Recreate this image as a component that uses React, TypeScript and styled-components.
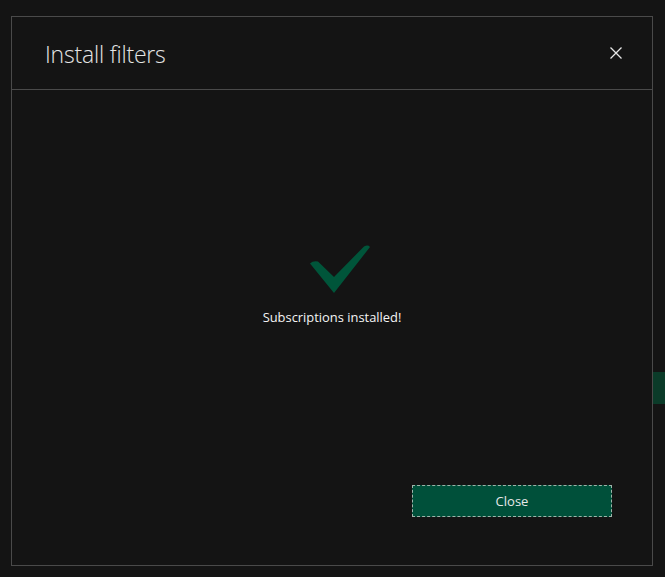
import React from "react"
import styled, { createGlobalStyle } from "styled-components"

const GlobalStyle = createGlobalStyle`
  html, body {
    margin: 0;
    padding: 0;
    background: #141414;
  }
  body {
    font-family: "Open Sans", "Liberation Sans", sans-serif;
    color: #f0f0f0;
  }
`

const Page = styled.div`
  position: relative;
  width: 665px;
  height: 577px;
  padding: 16px 0 0 11px;
  box-sizing: border-box;
  overflow: hidden;
`

const BehindTab = styled.div`
  position: absolute;
  left: 653px;
  top: 372px;
  width: 20px;
  height: 32px;
  background: #0b3b29;
`

const Dialog = styled.div`
  position: relative;
  z-index: 1;
  width: 642px;
  height: 550px;
  box-sizing: border-box;
  border: 1px solid #4a4a4a;
  background: #141414;
  display: flex;
  flex-direction: column;
`

const Header = styled.div`
  height: 72px;
  flex: none;
  display: flex;
  align-items: center;
  justify-content: space-between;
  padding: 0 26px 0 33px;
  border-bottom: 1px solid #4a4a4a;
`

const Title = styled.h1`
  margin: 0;
  padding-top: 2px;
  font-family: "Open Sans", "Liberation Sans", sans-serif;
  font-weight: 300;
  font-size: 23px;
  letter-spacing: -0.2px;
  color: #e4e4e4;
`

const CloseIcon = styled.button`
  width: 20px;
  height: 20px;
  padding: 0;
  border: none;
  background: transparent;
  display: flex;
  align-items: center;
  justify-content: center;
  cursor: pointer;
`

const Body = styled.div`
  flex: 1;
  display: flex;
  flex-direction: column;
  padding: 0 40px 48px;
`

const Status = styled.div`
  margin-top: 154px;
  display: flex;
  flex-direction: column;
  align-items: center;
  gap: 14px;
`

const Message = styled.p`
  margin: 0;
  font-size: 12.9px;
  color: #f4f4f4;
`

const Footer = styled.div`
  margin-top: auto;
  display: flex;
  justify-content: flex-end;
`

const Button = styled.button`
  width: 200px;
  height: 32px;
  box-sizing: border-box;
  background: #00503a;
  border: 1px dashed #9fb4ab;
  color: #e8e8e8;
  font-family: "Open Sans", "Liberation Sans", sans-serif;
  font-size: 13px;
  cursor: pointer;
`

const App = () => {
  return (
    <>
      <GlobalStyle />
      <Page>
        <BehindTab />
        <Dialog>
          <Header>
            <Title>Install filters</Title>
            <CloseIcon aria-label="Close">
              <svg width="12" height="12" viewBox="0 0 12 12">
                <path d="M0.5 0.5 L11.5 11.5 M11.5 0.5 L0.5 11.5" stroke="#e6e6e6" strokeWidth="1.3" />
              </svg>
            </CloseIcon>
          </Header>
          <Body>
            <Status>
              <svg width="76" height="50" viewBox="0 0 76 50">
                <path
                  d="M16 19.5 Q19 16.5 24 17.5 L40 33 L70 2.5 Q74 0.5 76 3 L40 49 Z"
                  fill="#00553a"
                />
              </svg>
              <Message>Subscriptions installed!</Message>
            </Status>
            <Footer>
              <Button>Close</Button>
            </Footer>
          </Body>
        </Dialog>
      </Page>
    </>
  )
}

export default App
